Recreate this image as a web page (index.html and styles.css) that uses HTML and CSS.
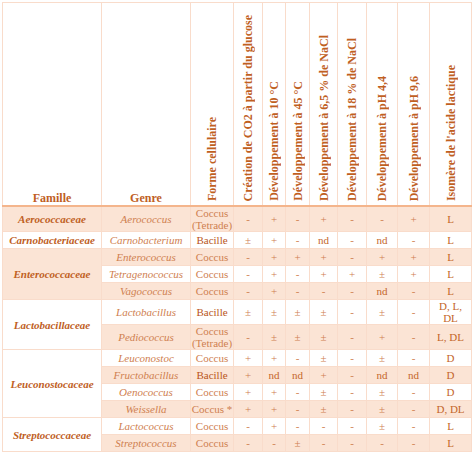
FILE: index.html
```html
<!DOCTYPE html>
<html lang="fr">
<head>
<meta charset="utf-8">
<link rel="stylesheet" href="styles.css">
</head>
<body>
<table class="tbl">
  <colgroup>
    <col class="c-fam"><col class="c-gen"><col class="c-forme">
    <col class="c-co2"><col class="c-10"><col class="c-45"><col class="c-65">
    <col class="c-18"><col class="c-44"><col class="c-96"><col class="c-iso">
  </colgroup>
  <thead>
    <tr>
      <th class="h-flat">Famille</th>
      <th class="h-flat">Genre</th>
      <th><div class="vt">Forme cellulaire</div></th>
      <th><div class="vt">Création de CO2 à partir du glucose</div></th>
      <th><div class="vt">Développement à 10 °C</div></th>
      <th><div class="vt">Développement à 45 °C</div></th>
      <th><div class="vt">Développement à 6,5 % de NaCl</div></th>
      <th><div class="vt">Développement à 18 % de NaCl</div></th>
      <th><div class="vt">Développement à pH 4,4</div></th>
      <th><div class="vt">Développement à pH 9,6</div></th>
      <th><div class="vt">Isomère de l'acide lactique</div></th>
    </tr>
  </thead>
  <tbody>
    <tr class="sh">
      <td class="fam">Aerococcaceae</td><td class="gen">Aerococcus</td><td>Coccus<br>(Tetrade)</td>
      <td>-</td><td>+</td><td>-</td><td>+</td><td>-</td><td>-</td><td>+</td><td class="let">L</td>
    </tr>
    <tr>
      <td class="fam">Carnobacteriaceae</td><td class="gen">Carnobacterium</td><td class="b">Bacille</td>
      <td>±</td><td>+</td><td>-</td><td class="let">nd</td><td>-</td><td class="let">nd</td><td>-</td><td class="let">L</td>
    </tr>
    <tr class="sh">
      <td class="fam" rowspan="3">Enterococcaceae</td><td class="gen">Enterococcus</td><td>Coccus</td>
      <td>-</td><td>+</td><td>+</td><td>+</td><td>-</td><td>+</td><td>+</td><td class="let">L</td>
    </tr>
    <tr>
      <td class="gen">Tetragenococcus</td><td>Coccus</td>
      <td>-</td><td>+</td><td>-</td><td>+</td><td>+</td><td>±</td><td>+</td><td class="let">L</td>
    </tr>
    <tr class="sh">
      <td class="gen">Vagococcus</td><td>Coccus</td>
      <td>-</td><td>+</td><td>-</td><td>-</td><td>-</td><td class="let">nd</td><td>-</td><td class="let">L</td>
    </tr>
    <tr>
      <td class="fam" rowspan="2">Lactobacillaceae</td><td class="gen">Lactobacillus</td><td class="b">Bacille</td>
      <td>±</td><td>±</td><td>±</td><td>±</td><td>-</td><td>±</td><td>-</td><td class="let">D, L,<br>DL</td>
    </tr>
    <tr class="sh">
      <td class="gen">Pediococcus</td><td>Coccus<br>(Tetrade)</td>
      <td>-</td><td>±</td><td>±</td><td>±</td><td>-</td><td>+</td><td>-</td><td class="let">L, DL</td>
    </tr>
    <tr>
      <td class="fam" rowspan="4">Leuconostocaceae</td><td class="gen">Leuconostoc</td><td>Coccus</td>
      <td>+</td><td>+</td><td>-</td><td>±</td><td>-</td><td>±</td><td>-</td><td class="let">D</td>
    </tr>
    <tr class="sh">
      <td class="gen">Fructobacillus</td><td class="b">Bacille</td>
      <td>+</td><td class="let">nd</td><td class="let">nd</td><td>+</td><td>-</td><td class="let">nd</td><td class="let">nd</td><td class="let">D</td>
    </tr>
    <tr>
      <td class="gen">Oenococcus</td><td>Coccus</td>
      <td>+</td><td>+</td><td>-</td><td>±</td><td>-</td><td>±</td><td>-</td><td class="let">D</td>
    </tr>
    <tr class="sh">
      <td class="gen">Weissella</td><td>Coccus *</td>
      <td>+</td><td>+</td><td>-</td><td>±</td><td>-</td><td>±</td><td>-</td><td class="let">D, DL</td>
    </tr>
    <tr>
      <td class="fam" rowspan="2">Streptococcaceae</td><td class="gen">Lactococcus</td><td>Coccus</td>
      <td>-</td><td>+</td><td>-</td><td>-</td><td>-</td><td>±</td><td>-</td><td class="let">L</td>
    </tr>
    <tr class="sh">
      <td class="gen">Streptococcus</td><td>Coccus</td>
      <td>-</td><td>-</td><td>±</td><td>-</td><td>-</td><td>-</td><td>-</td><td class="let">L</td>
    </tr>
  </tbody>
</table>
</body>
</html>
```
FILE: styles.css
```css
html, body {
  margin: 0;
  background: #ffffff;
}
body {
  padding: 2px 0 0 2px;
  font-family: "Liberation Serif", "Times New Roman", serif;
  color: #cf8050;
}
.tbl {
  border-collapse: collapse;
  table-layout: fixed;
  width: 469px;
  font-size: 11px;
}
.c-fam { width: 99px; }
.c-gen { width: 89px; }
.c-forme { width: 43px; }
.c-co2 { width: 29px; }
.c-10 { width: 23px; }
.c-45 { width: 24px; }
.c-65 { width: 28px; }
.c-18 { width: 29px; }
.c-44 { width: 31px; }
.c-96 { width: 32px; }
.c-iso { width: 42px; }

.tbl th, .tbl td {
  border: 1px solid #f9dccb;
  padding: 0;
  text-align: center;
}
.tbl th {
  height: 202px;
  vertical-align: bottom;
  color: #c0601f;
  font-size: 12px;
  font-weight: bold;
  border-bottom: 2px solid #f4b58c;
}
.h-flat {
  padding-bottom: 2px;
  line-height: 14px;
}
.vt {
  writing-mode: vertical-rl;
  transform: rotate(180deg);
  margin: 0 auto;
  padding-top: 4px;
  line-height: 14px;
  white-space: nowrap;
}
.tbl td {
  height: 16px;
  line-height: 12px;
  vertical-align: middle;
}
.sh td {
  background: #fbe4d5;
}
.tbl td.fam {
  font-weight: bold;
  font-style: italic;
  color: #c0601f;
  background: #ffffff;
}
.sh td.fam {
  background: #fbe4d5;
}
.gen {
  font-style: italic;
}
.tbl td.b {
  color: #b9561a;
}
.tbl td.let {
  color: #c4662b;
}
```
